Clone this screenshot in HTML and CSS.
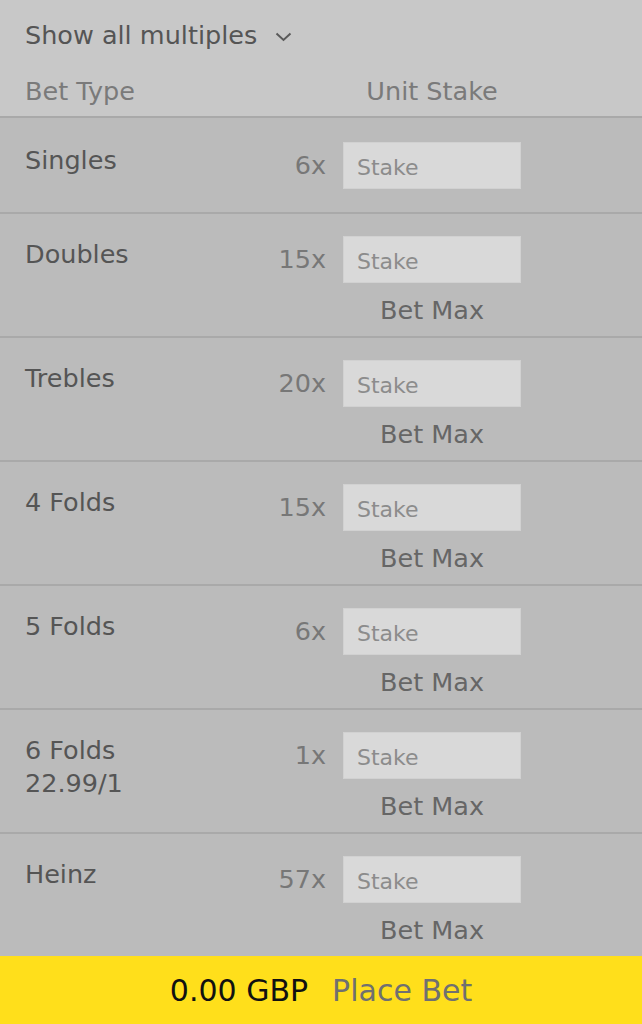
FILE: index.html
```html
<!DOCTYPE html>
<html lang="en">
<head>
    <meta charset="UTF-8">
    <meta name="viewport" content="width=device-width, initial-scale=1.0">
    <title>Bet Slip - Multiples</title>
    <link rel="stylesheet" href="styles.css">
</head>
<body>
    <div class="betslip">
        <div class="slip-header">
            <div class="toggle">
                Show all multiples
                <svg class="chevron" width="17" height="10" viewBox="0 0 17 10">
                    <polyline points="1.5,1.5 8.5,8 15.5,1.5" fill="none" stroke="#5a5a5a" stroke-width="2"/>
                </svg>
            </div>
            <div class="columns">
                <span class="col-type">Bet Type</span>
                <span class="col-stake">Unit Stake</span>
            </div>
        </div>

        <div class="bet-row singles">
            <div class="bet-name">Singles</div>
            <div class="bet-count">6x</div>
            <div class="stake-cell">
                <input class="stake" type="text" placeholder="Stake">
            </div>
        </div>

        <div class="bet-row">
            <div class="bet-name">Doubles</div>
            <div class="bet-count">15x</div>
            <div class="stake-cell">
                <input class="stake" type="text" placeholder="Stake">
                <div class="bet-max">Bet Max</div>
            </div>
        </div>

        <div class="bet-row">
            <div class="bet-name">Trebles</div>
            <div class="bet-count">20x</div>
            <div class="stake-cell">
                <input class="stake" type="text" placeholder="Stake">
                <div class="bet-max">Bet Max</div>
            </div>
        </div>

        <div class="bet-row">
            <div class="bet-name">4 Folds</div>
            <div class="bet-count">15x</div>
            <div class="stake-cell">
                <input class="stake" type="text" placeholder="Stake">
                <div class="bet-max">Bet Max</div>
            </div>
        </div>

        <div class="bet-row">
            <div class="bet-name">5 Folds</div>
            <div class="bet-count">6x</div>
            <div class="stake-cell">
                <input class="stake" type="text" placeholder="Stake">
                <div class="bet-max">Bet Max</div>
            </div>
        </div>

        <div class="bet-row">
            <div class="bet-name">6 Folds<br>22.99/1</div>
            <div class="bet-count">1x</div>
            <div class="stake-cell">
                <input class="stake" type="text" placeholder="Stake">
                <div class="bet-max">Bet Max</div>
            </div>
        </div>

        <div class="bet-row">
            <div class="bet-name">Heinz</div>
            <div class="bet-count">57x</div>
            <div class="stake-cell">
                <input class="stake" type="text" placeholder="Stake">
                <div class="bet-max">Bet Max</div>
            </div>
        </div>

        <div class="place-bet">
            <span class="total">0.00 GBP</span>
            <span class="action">Place Bet</span>
        </div>
    </div>
</body>
</html>
```

FILE: styles.css
```css
* {
    margin: 0;
    padding: 0;
    box-sizing: border-box;
    font-family: 'DejaVu Sans', sans-serif;
}

body {
    background: #bbbbbb;
}

.betslip {
    width: 642px;
    min-height: 100vh;
    display: flex;
    flex-direction: column;
}

.slip-header {
    background: #c8c8c8;
    padding: 15px 0 5px 25px;
    border-bottom: 2px solid #a9a9a9;
    font-size: 25.5px;
}

.toggle {
    display: flex;
    align-items: center;
    gap: 18px;
    height: 40px;
    color: #555;
}

.chevron {
    margin-top: 3px;
}

.columns {
    display: grid;
    grid-template-columns: 1fr 178px;
    padding-right: 121px;
    margin-top: 16px;
    line-height: 40px;
    color: #7a7a7a;
}

.col-stake {
    text-align: center;
}

.bet-row {
    display: grid;
    grid-template-columns: 1fr auto 178px;
    column-gap: 17px;
    align-items: start;
    padding: 22px 121px 0 25px;
    background: #bbbbbb;
    border-bottom: 2px solid #a9a9a9;
    font-size: 25.5px;
}

.bet-row.singles {
    padding-top: 24px;
    min-height: 96px;
}

.bet-name {
    margin-top: 2px;
    line-height: 33px;
    color: #555;
}

.bet-count {
    line-height: 46px;
    color: #777;
}

.stake-cell {
    display: flex;
    flex-direction: column;
}

.stake {
    width: 178px;
    height: 47px;
    padding: 3px 13px 0;
    background: #d9d9d9;
    border: 1px solid #d1d1d1;
    outline: none;
    font-size: 22px;
    color: #555;
}

.stake::placeholder {
    color: #8c8c8c;
}

.bet-max {
    margin: 7px 0 6px;
    line-height: 40px;
    text-align: center;
    color: #666;
}

.bet-row:nth-last-child(2) {
    border-bottom: none;
}

.place-bet {
    margin-top: auto;
    height: 68px;
    background: #ffdf1b;
    display: flex;
    justify-content: center;
    align-items: center;
    gap: 24px;
    font-size: 30px;
}

.total {
    color: #111;
}

.action {
    color: #707070;
}
```
